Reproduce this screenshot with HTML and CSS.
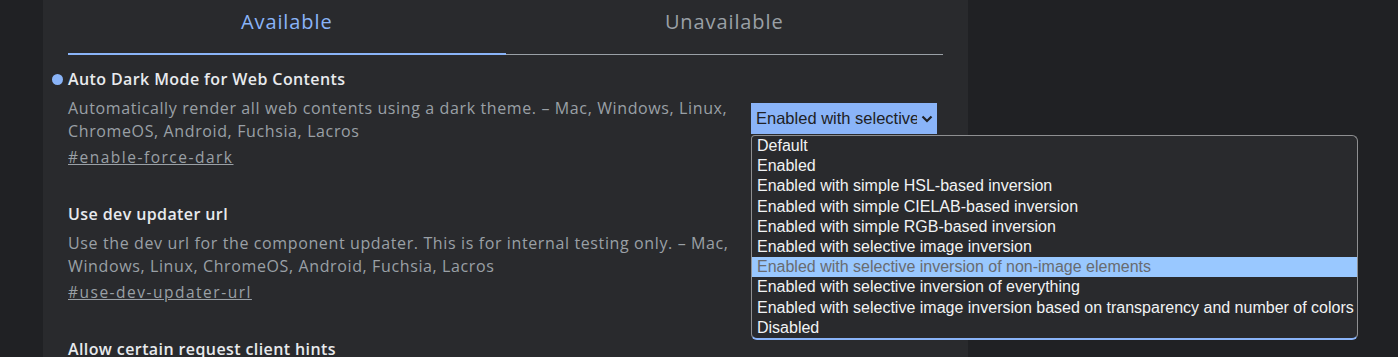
FILE: index.html
```html
<!DOCTYPE html>
<html lang="en">
<head>
<meta charset="utf-8">
<title>Experiments</title>
<link rel="stylesheet" href="styles.css">
</head>
<body>
<div class="panel">
  <div class="tabs">
    <div class="tab tab-active">Available</div>
    <div class="tab">Unavailable</div>
  </div>
  <div class="experiments">
    <div class="experiment modified">
      <div class="exp-text">
        <h3 class="exp-title">Auto Dark Mode for Web Contents</h3>
        <p class="exp-desc">Automatically render all web contents using a dark theme. – Mac, Windows, Linux, ChromeOS, Android, Fuchsia, Lacros</p>
        <a class="exp-link" href="#enable-force-dark">#enable-force-dark</a>
      </div>
      <div class="exp-control">
        <div class="select">
          <span class="select-value">Enabled with selective image inversion</span>
          <svg class="chevron" width="12" height="8" viewBox="0 0 12 8"><path d="M1.5 1.5 L6 6 L10.5 1.5" fill="none" stroke="#202124" stroke-width="2.2"/></svg>
        </div>
        <ul class="dropdown">
          <li>Default</li>
          <li>Enabled</li>
          <li>Enabled with simple HSL-based inversion</li>
          <li>Enabled with simple CIELAB-based inversion</li>
          <li>Enabled with simple RGB-based inversion</li>
          <li>Enabled with selective image inversion</li>
          <li class="hl">Enabled with selective inversion of non-image elements</li>
          <li>Enabled with selective inversion of everything</li>
          <li>Enabled with selective image inversion based on transparency and number of colors</li>
          <li>Disabled</li>
        </ul>
      </div>
    </div>
    <div class="experiment">
      <div class="exp-text">
        <h3 class="exp-title">Use dev updater url</h3>
        <p class="exp-desc">Use the dev url for the component updater. This is for internal testing only. – Mac, Windows, Linux, ChromeOS, Android, Fuchsia, Lacros</p>
        <a class="exp-link" href="#use-dev-updater-url">#use-dev-updater-url</a>
      </div>
    </div>
    <div class="experiment">
      <div class="exp-text">
        <h3 class="exp-title">Allow certain request client hints</h3>
      </div>
    </div>
  </div>
</div>
</body>
</html>
```
FILE: styles.css
```css
* { box-sizing: border-box; }
html, body { margin: 0; height: 100%; }
body {
  background: #202124;
  font-family: "Open Sans", "DejaVu Sans", sans-serif;
  overflow: hidden;
}
.panel {
  margin-left: 43px;
  width: 925px;
  min-height: 100%;
  background: #292a2d;
  padding: 0 25px;
}
.tabs {
  display: flex;
  height: 55px;
}
.tab {
  flex: 1;
  text-align: center;
  font-size: 20px;
  letter-spacing: 0.9px;
  color: #9aa0a6;
  padding-top: 8px;
  border-bottom: 1px solid #9aa0a6;
  height: 55px;
}
.tab-active {
  color: #8ab4f8;
  border-bottom: 2px solid #8ab4f8;
}
.experiments { padding-top: 14px; }
.experiment {
  display: flex;
  position: relative;
  margin-bottom: 35px;
}
.modified::before {
  content: "";
  position: absolute;
  left: -16px;
  top: 5px;
  width: 11px;
  height: 11px;
  border-radius: 50%;
  background: #8ab4f8;
}
.exp-text { width: 670px; }
.exp-title {
  margin: 0;
  font-size: 16px;
  letter-spacing: 0.4px;
  font-weight: 600;
  color: #e8eaed;
  line-height: 20px;
}
.exp-desc {
  margin: 8px 0 0;
  font-size: 16px;
  letter-spacing: 0.62px;
  line-height: 23px;
  color: #9aa0a6;
}
.exp-link {
  display: inline-block;
  margin-top: 3px;
  font-size: 15.5px;
  letter-spacing: 1.5px;
  line-height: 23px;
  color: #9aa0a6;
}
.exp-control {
  position: relative;
  margin-left: 13px;
  margin-top: 34px;
}
.select {
  width: 186px;
  height: 31px;
  background: #8ab4f8;
  display: flex;
  align-items: center;
  padding: 0 4px 0 5px;
  font-family: "Liberation Sans", Arial, sans-serif;
  font-size: 16.5px;
  color: #202124;
}
.select-value {
  flex: 1;
  overflow: hidden;
  white-space: nowrap;
}
.chevron { margin-left: 4px; flex: none; }
.dropdown {
  position: absolute;
  top: 32px;
  left: 0;
  width: 607px;
  margin: 0;
  padding: 0;
  list-style: none;
  background: #292a2d;
  border: 1px solid #8e8f91;
  border-bottom: 2px solid #8ab4f8;
  border-radius: 4px 6px 6px 6px;
  font-family: "Liberation Sans", Arial, sans-serif;
  font-size: 16px;
  color: #f1f3f4;
}
.dropdown li {
  height: 20.2px;
  line-height: 20px;
  padding-left: 5px;
  white-space: nowrap;
}
.dropdown li.hl {
  background: #99c8ff;
  color: #686b70;
}
```
